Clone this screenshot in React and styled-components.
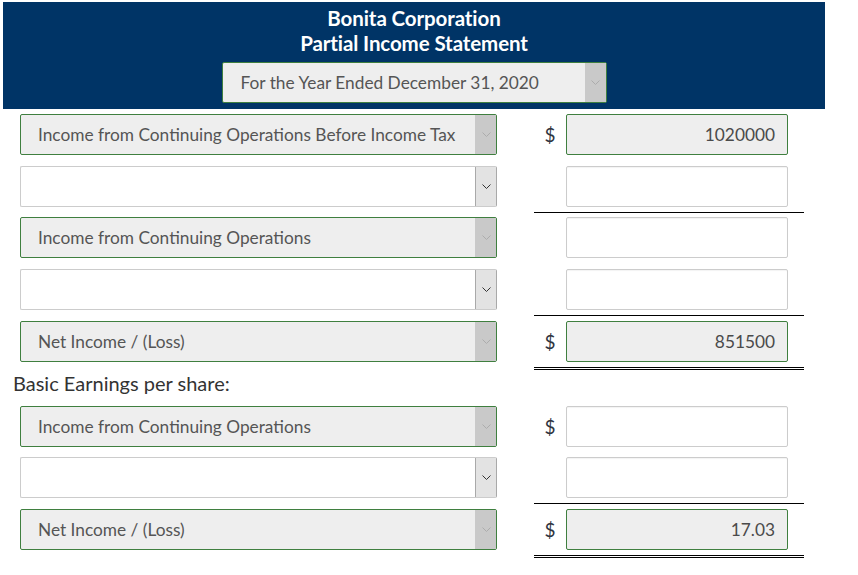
import React from 'react';
import styled, { createGlobalStyle } from 'styled-components';

const GlobalStyle = createGlobalStyle`
    body {
        margin: 0;
        background: #ffffff;
        font-family: Lato, "Open Sans", Arial, sans-serif;
    }
`

const Page = styled.div`
    width: 858px;
    height: 575px;
    padding: 2px 33px 0 3px;
    box-sizing: border-box;
    overflow: hidden;
`

const Header = styled.div`
    background-color: #003466;
    height: 106.7px;
    padding-top: 4px;
    box-sizing: border-box;
    display: flex;
    flex-direction: column;
    align-items: center;
`

const Title = styled.div`
    color: #ffffff;
    font-weight: 700;
    font-size: 20.5px;
    line-height: 24.5px;
    letter-spacing: -0.1px;
`

const Body = styled.div`
    padding: 5.3px 0 0 17px;
`

const Row = styled.div`
    display: flex;
    align-items: flex-start;
    height: 51.7px;
`

const SelectBox = styled.div`
    width: ${props => props.width || 477}px;
    height: 41px;
    box-sizing: border-box;
    display: flex;
    margin-top: ${props => props.top || 0}px;
    border: 1px solid ${props => props.filled ? '#3f7f3f' : '#cccccc'};
    border-right-color: ${props => props.filled ? '#3f7f3f' : '#a9a9a9'};
    background-color: ${props => props.filled ? '#eeeeee' : '#ffffff'};
    border-radius: 2px;
`

const SelectText = styled.div`
    flex: 1;
    padding-left: ${props => props.pad || 17}px;
    display: flex;
    align-items: center;
    font-size: 17.3px;
    color: #555555;
    white-space: nowrap;
`

const Arrow = styled.div`
    width: 20px;
    display: flex;
    align-items: center;
    justify-content: center;
    background-color: ${props => props.filled ? '#c9c9c9' : '#e3e3e3'};
    border-left: 1px solid ${props => props.filled ? '#c9c9c9' : '#a9a9a9'};
    color: ${props => props.filled ? '#acacac' : '#333333'};
`

const AmountCell = styled.div`
    margin-left: 37px;
    width: 270px;
    display: flex;
    padding-bottom: 5px;
    border-bottom: ${props => props.line === 'double' ? '3px double #000' : props.line === 'single' ? '1px solid #000' : 'none'};
`

const Dollar = styled.div`
    width: 32px;
    height: 41px;
    display: flex;
    align-items: center;
    justify-content: center;
    font-size: 19px;
    color: #2f3440;
`

const AmountInput = styled.div`
    width: 222px;
    height: 41px;
    box-sizing: border-box;
    border: 1px solid ${props => props.filled ? '#3f7f3f' : '#cccccc'};
    background-color: ${props => props.filled ? '#eeeeee' : '#ffffff'};
    box-shadow: ${props => props.filled ? 'none' : 'inset 0 1px 1px rgba(0,0,0,0.05)'};
    border-radius: 2px;
    display: flex;
    align-items: center;
    justify-content: flex-end;
    padding-right: 12px;
    font-size: 17.3px;
    color: #4a4a4a;
`

const SectionLabel = styled.div`
    height: 33.3px;
    line-height: 22px;
    font-size: 20px;
    color: #333333;
    margin-left: -7px;
`

const Chevron = () => (
    <svg width="9" height="5" viewBox="0 0 9 5">
        <polyline points="0.5,0.5 4.5,4.5 8.5,0.5" fill="none" stroke="currentColor" strokeWidth="1" />
    </svg>
)

const Select = ({ text, filled, width, pad, top }) => (
    <SelectBox filled={filled} width={width} top={top}>
        <SelectText pad={pad}>{text}</SelectText>
        <Arrow filled={filled}><Chevron /></Arrow>
    </SelectBox>
)

const rows = [
    { text: 'Income from Continuing Operations Before Income Tax', dollar: true, value: '1020000' },
    { text: '', line: 'single' },
    { text: 'Income from Continuing Operations' },
    { text: '', line: 'single' },
    { text: 'Net Income / (Loss)', dollar: true, value: '851500', line: 'double' },
]

const perShare = [
    { text: 'Income from Continuing Operations', dollar: true },
    { text: '', line: 'single' },
    { text: 'Net Income / (Loss)', dollar: true, value: '17.03', line: 'double' },
]

function StatementRow ({ row }) {
    return (
        <Row>
            <Select text={row.text} filled={row.text !== ''} />
            <AmountCell line={row.line}>
                <Dollar>{row.dollar ? '$' : ''}</Dollar>
                <AmountInput filled={!!row.value}>{row.value}</AmountInput>
            </AmountCell>
        </Row>
    )
}

function App () {
    return (
        <Page>
            <GlobalStyle />
            <Header>
                <Title>Bonita Corporation</Title>
                <Title>Partial Income Statement</Title>
                <Select text="For the Year Ended December 31, 2020" filled width={385} pad={18} top={7} />
            </Header>
            <Body>
                {rows.map((row, i) => <StatementRow key={i} row={row} />)}
                <SectionLabel>Basic Earnings per share:</SectionLabel>
                {perShare.map((row, i) => <StatementRow key={i} row={row} />)}
            </Body>
        </Page>
    )
}

export default App;
